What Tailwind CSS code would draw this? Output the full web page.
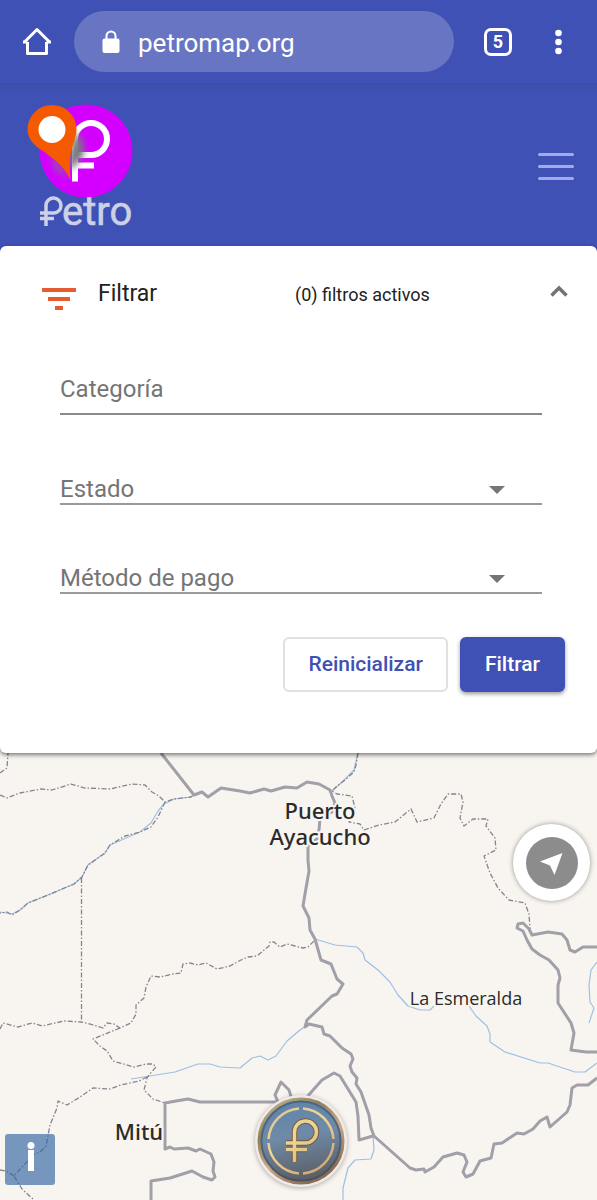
<!DOCTYPE html>
<html lang="es">
<head>
<meta charset="utf-8">
<meta name="viewport" content="width=device-width, initial-scale=1">
<title>petromap.org</title>
<script src="https://cdn.jsdelivr.net/npm/@tailwindcss/browser@4"></script>
</head>
<body class="flex min-h-screen flex-col bg-[#f8f5f0] font-['Roboto',sans-serif] text-[#212121]">

<!-- Browser toolbar -->
<div class="flex h-[83px] shrink-0 items-center bg-[#3f51b5] pr-[22px] pl-5 text-white">
  <button type="button" aria-label="Inicio" class="shrink-0">
    <svg class="h-8 w-8" viewBox="0 0 32 32" fill="none" stroke="currentColor" stroke-width="3" stroke-linejoin="round"><path d="M7.500 16V27.500H26.500V16M3 16H7.500M31 16H26.500M4.500 16L17 3.500L29.500 16"/></svg>
  </button>
  <label class="mr-[30px] ml-[22px] flex h-[61px] min-w-0 flex-1 items-center gap-[18px] rounded-full bg-[#6875c3] pl-7">
    <svg class="h-6 w-[18px] shrink-0" viewBox="0 0 18 24" aria-hidden="true"><rect x="0.500" y="8.500" width="17" height="14.500" rx="2" fill="#fff"/><path d="M4.500 9V6a4.500 4.500 0 0 1 9 0V9" fill="none" stroke="#fff" stroke-width="2"/></svg>
    <input type="text" aria-label="Dirección" value="petromap.org" class="w-full min-w-0 bg-transparent pt-[3px] text-[26px] leading-8 text-white outline-none">
  </label>
  <button type="button" aria-label="5 pestañas" class="flex h-7 w-7 shrink-0 items-center justify-center rounded-[7px] border-3 border-white text-lg leading-none font-bold">5</button>
  <button type="button" aria-label="Menú del navegador" class="ml-[31px] shrink-0">
    <svg class="h-8 w-8" viewBox="0 0 32 32" fill="currentColor"><circle cx="15.500" cy="7" r="3.300"/><circle cx="15.500" cy="16" r="3.300"/><circle cx="15.500" cy="25" r="3.300"/></svg>
  </button>
</div>

<!-- Site header -->
<header class="flex h-[163px] shrink-0 items-center justify-between bg-[#3f51b5] bg-linear-to-b from-[#3c4ca8] to-[#3f51b5] to-5% pr-[22px] pl-5">
  <a href="#" aria-label="Petro">
    <svg class="h-[144px] w-[120px]" viewBox="20 93 120 144">
      <defs>
        <filter id="soft" x="-50%" y="-50%" width="200%" height="200%"><feGaussianBlur stdDeviation="3"/></filter>
      </defs>
      <circle cx="86" cy="151" r="46.500" fill="#d400ff"/>
      <path d="M75 181.500V139a16 16 0 1 1 16 16H75M75 165.500H94" fill="none" stroke="#fff" stroke-width="6"/>
      <path d="M76 132Q88 144 82 158L71 170Q66 160 76 132ZM50 153L68 178L56 170Z" fill="#77777f" filter="url(#soft)"/>
      <path d="M70 180C66 168 54 159 43 151C33 145 27.500 138 27.500 129.500A24.500 24.500 0 0 1 76.500 129.500C76.500 139 70.500 148 70 159C69.500 168 70.500 174 70 180Z" fill="#f55a00"/>
      <circle cx="52" cy="129.500" r="13.500" fill="#fff"/>
      <path d="M46 226V205a7.500 7.500 0 1 1 8 8H40M40 218.500H54" fill="none" stroke="#ccd1e6" stroke-width="3.500"/>
      <text x="62" y="225" font-size="40" fill="#ccd1e6" stroke="#ccd1e6" stroke-width="0.600">etro</text>
    </svg>
  </a>
  <button type="button" aria-label="Menú" class="mt-1 flex w-[38px] flex-col gap-[9px] px-px">
    <span class="h-[3px] rounded-sm bg-[#a0abe8]"></span>
    <span class="h-[3px] rounded-sm bg-[#a0abe8]"></span>
    <span class="h-[3px] rounded-sm bg-[#a0abe8]"></span>
  </button>
</header>

<!-- Filter panel -->
<div class="shrink-0 bg-linear-to-b from-[#3f51b5] from-50% to-[#f8f5f0] to-50%">
<form class="relative z-10 rounded-md bg-white pb-[61px] shadow-[0_2px_4px_rgba(0,0,0,0.5)]">
  <button type="button" aria-expanded="true" class="flex h-[95px] w-full items-center pr-7 pl-[42px] text-left">
    <svg class="mt-[10px] h-6 w-[34px]" viewBox="0 0 34 24" fill="#e65c32" aria-hidden="true"><path d="M0 1H34V5H0ZM6 10H28V14H6ZM13 19H21V23H13Z"/></svg>
    <span class="ml-[22px] w-[197px] text-[23px] leading-8">Filtrar</span>
    <span class="flex-1 pt-[2px] text-lg">(0) filtros activos</span>
    <svg class="mb-[3px] h-5 w-5" viewBox="0 0 20 20" fill="none" stroke="#737373" stroke-width="3.500" aria-hidden="true"><path d="M2.500 13.500L10 6L17.500 13.500"/></svg>
  </button>
  <div class="flex flex-col pr-[55px] pl-[60px] text-2xl text-[#757575]">
    <input type="text" aria-label="Categoría" placeholder="Categoría" class="mt-7 h-[46px] border-b-2 border-[#8a8a8a] pb-1 outline-none placeholder:text-[#757575]">
    <div class="relative mt-[58px]">
      <select aria-label="Estado" class="block h-8 w-full appearance-none border-b-2 border-[#9a9a9a] pt-[2px] leading-7 outline-none"><option>Estado</option></select>
      <svg class="pointer-events-none absolute top-[13px] right-[37px] h-2 w-4" viewBox="0 0 16 8" fill="#757575" aria-hidden="true"><path d="M0 0H16L8 8Z"/></svg>
    </div>
    <div class="relative mt-[57px]">
      <select aria-label="Método de pago" class="block h-8 w-full appearance-none border-b-2 border-[#9a9a9a] pt-[2px] leading-7 outline-none"><option>Método de pago</option></select>
      <svg class="pointer-events-none absolute top-[13px] right-[37px] h-2 w-4" viewBox="0 0 16 8" fill="#757575" aria-hidden="true"><path d="M0 0H16L8 8Z"/></svg>
    </div>
  </div>
  <div class="mt-[43px] flex justify-end gap-3 pr-8 text-[21px] font-medium">
    <button type="reset" class="h-[55px] rounded-md border-2 border-[#e0e0e0] px-[23px] text-[#3f51b5]">Reinicializar</button>
    <button type="submit" class="h-[55px] rounded-md bg-[#3f51b5] px-[25px] text-white shadow-[0_2px_4px_rgba(0,0,0,0.4)]">Filtrar</button>
  </div>
</form>
</div>

<!-- Map -->
<main class="relative min-h-[447px] flex-1 overflow-hidden">
  <svg class="absolute inset-0 h-full w-full" viewBox="0 753 597 447" preserveAspectRatio="xMidYMid slice" role="img" aria-label="Mapa" fill="none" stroke-linejoin="round">
    <g stroke="#9dbfe4" stroke-width="1.200">
      <path d="M0 912L12 914L20 910L28 903L48 895L74 884L82 877L88 865L105 853L110 845L140 832L151 823L158 811L164 804L174 799L191 797"/>
      <path d="M358 753L354 770L342 782L332 791"/>
      <path d="M315 939L335 945L357 947L363 953L365 960L378 970L390 982L398 995L408 1006L420 1010L430 1010L434 1006"/>
      <path d="M469 1006L476 1016L487 1026L490 1034V1042L505 1052L540 1063H548L575 1072H585L597 1063"/>
      <path d="M597 962L591 970L589 985L590 1002L594 1008L589 1023"/>
      <path d="M131 1079L175 1072L198 1064L210 1064L220 1067L240 1068L252 1058L260 1056L268 1060L276 1056L287 1041L300 1030L306 1026"/>
      <path d="M373 1136L374 1150L371 1159L355 1160L348 1168L343 1188L343 1200"/>
    </g>
    <g stroke="#85848d" stroke-width="1.300" stroke-dasharray="5 2 1.500 2">
      <path d="M0 773L7 768L8 753M0 795L7 798L20 793L41 789L52 790L71 784L85 788L110 789L132 784L145 785L152 792L159 796L165 802L174 799L191 797L195 794"/>
      <path d="M165 802L158 817L151 827L140 832L125 836L110 845L105 853L88 865L82 877L74 884L48 895L28 903L20 910L12 915L7 912L0 913"/>
      <path d="M81.500 878V1021"/>
      <path d="M0 1029L3 1023L18 1027L32 1023L42 1026L64 1021L81 1022L90 1024L103 1028L107 1023L114 1024L120 1028L131 1023L136 1014L136 1005L144 998L146 987L151 976L160 977L173 974L181 973L183 964L190 963L198 965L206 963L217 969L230 966L241 960L248 957L257 956L269 946L270 942L274 942L280 947L287 944L295 946L303 948L308 947L315 940"/>
      <path d="M120 1028L93 1039L100 1046L107 1051L113 1061L134 1067L146 1064L153 1064L156 1067L149 1075L147 1078L144 1090L153 1099L165 1103"/>
      <path d="M147 1077L139 1081L121 1085L110 1089L93 1088L80 1097L67 1105L58 1101L57 1108L50 1125L47 1141L46 1146L40 1152L34 1154L14 1176L22 1189L34 1200M0 1170L6 1171L14 1176"/>
      <path d="M358 753L356 765L354 772L345 780L336 787L332 791L337 794L352 796L355 808L349 822L360 824L364 830L379 825L395 822L411 809L417 822L434 818L441 804L448 794H461L463 802L460 818L464 826L473 819H488L486 826L495 838L496 850L484 856L490 873L498 888L509 900L525 903L529 914L530 929"/>
    </g>
    <g stroke="#a19fa8" stroke-width="3">
      <path d="M161 753L194 795L202 792L208 797L221 788L240 791L250 793L264 789L271 791L285 787L297 788L307 782L319 784L330 790L332 796L335 803L332 812L320 818L319 830L318 838L308 846L308 860L309 871L305 894L303 906L309 918L310 930L315 939L321 960L331 964L337 979L343 984L337 994L332 996L307 1020L305 1027L309 1024L322 1027L324 1034L330 1036L342 1048L351 1054L353 1059L350 1066L352 1072L357 1078L356 1084L361 1092L369 1115L371 1128L374 1136L410 1168L416 1170L424 1169L425 1172L434 1167L443 1157L457 1153L464 1155L467 1162L463 1172L466 1177L473 1174L480 1161L491 1158L494 1144L502 1143L517 1133L524 1134L533 1129L540 1121L547 1117L550 1127L567 1112L570 1105L572 1088L577 1085H588L597 1078"/>
      <path d="M151 1200V1181L170 1178L192 1171L203 1177L212 1180L215 1177L213 1171L214 1162L211 1154L200 1149L196 1151L188 1148L174 1149L170 1147L165 1149V1103L176 1101L188 1099L200 1102H278L275 1095L281 1082L289 1090L292 1100M306 1098L322 1080L334 1073L340 1076L356 1102L358 1116L359 1140L373 1136"/>
      <path d="M597 1052H586L571 1050L574 1033L571 1023L558 1003V985L560 978L558 970L549 960L540 955L532 949L527 940L523 931L517 928L518 924L523 923L529 929L532 935L548 932L562 934L567 940L570 950L575 952L583 947H597"/>
    </g>
    <g font-family="'Noto Sans',sans-serif" fill="#2b2b2b" text-anchor="middle" stroke="#f8f5f0" stroke-width="4" paint-order="stroke">
      <text font-size="22" font-weight="500" x="320" y="819">Puerto</text>
      <text font-size="22" font-weight="500" x="320" y="845">Ayacucho</text>
      <text font-size="22" font-weight="500" x="139" y="1140">Mitú</text>
      <text font-family="'Open Sans',sans-serif" font-size="18" x="466" y="1005">La Esmeralda</text>
    </g>
  </svg>
  <button type="button" aria-label="Mi ubicación" class="absolute top-[71px] right-[7px] flex h-[77px] w-[77px] items-center justify-center rounded-full bg-white shadow-[0_0_5px_rgba(0,0,0,0.4)]">
    <svg class="h-[52px] w-[52px]" viewBox="0 0 52 52"><circle cx="26" cy="26" r="26" fill="#8c8c8c"/><path d="M36.500 16L14 24.500L24 28.500L28.500 38Z" fill="#fff"/></svg>
  </button>
  <button type="button" aria-label="Petro" class="absolute bottom-[13px] left-1/2 ml-[2px] h-[92px] w-[92px] -translate-x-1/2 rounded-full bg-[#eeeae7] shadow-[0_1px_5px_rgba(0,0,0,0.3)]">
    <svg class="h-full w-full" viewBox="0 0 92 92" fill="none">
      <defs>
        <linearGradient id="face" x1="0" y1="0" x2="0.200" y2="1"><stop stop-color="#5c84a8"/><stop offset="0.500" stop-color="#6f8aa8"/><stop offset="1" stop-color="#5c6168"/></linearGradient>
        <linearGradient id="rim" x1="0" y1="0" x2="0.600" y2="1"><stop stop-color="#cdbf9f"/><stop offset="0.350" stop-color="#8d8059"/><stop offset="0.650" stop-color="#cfa98a"/><stop offset="1" stop-color="#8a6a50"/></linearGradient>
        <linearGradient id="gold" gradientUnits="userSpaceOnUse" x1="20" y1="12" x2="65" y2="78"><stop stop-color="#dfc394"/><stop offset="0.450" stop-color="#f0d694"/><stop offset="1" stop-color="#cfa677"/></linearGradient>
      </defs>
      <circle cx="46" cy="46" r="42" fill="url(#face)" stroke="url(#rim)" stroke-width="3"/>
      <circle cx="46" cy="46" r="39.500" stroke="#30485c" stroke-opacity="0.500" stroke-width="2"/>
      <g stroke="url(#gold)" stroke-width="2.500"><path d="M48 13.500A33 33 0 0 1 78.500 44M78.500 48A33 33 0 0 1 48 78.500M44 78.500A33 33 0 0 1 13.500 48M13.500 44A33 33 0 0 1 44 13.500"/></g>
      <path d="M39.500 67V38a11 11 0 1 1 11 10H31M31 54.500H52" stroke="#705c3f" stroke-width="5.500"/>
      <path d="M39.500 67V38a11 11 0 1 1 11 10H31M31 54.500H52" stroke="url(#gold)" stroke-width="3.500"/>
    </svg>
  </button>
  <button type="button" aria-label="Información" class="absolute bottom-[15px] left-[5px] h-[51px] w-[50px] rounded-[3px] bg-[#2f62a2]/65">
    <svg class="h-full w-full" viewBox="0 0 50 51" fill="#fff"><circle cx="26" cy="11.500" r="3.500"/><rect x="23" y="16" width="6" height="21"/></svg>
  </button>
</main>
</body>
</html>
